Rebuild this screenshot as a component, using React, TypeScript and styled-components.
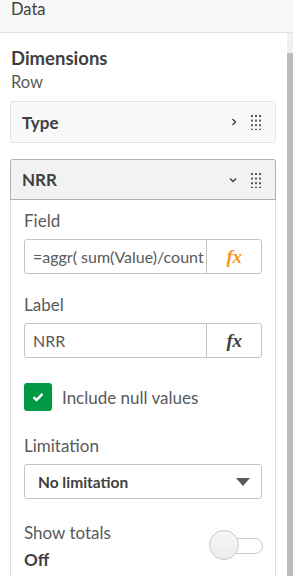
import React from 'react';
import styled, { createGlobalStyle } from 'styled-components';

const Global = createGlobalStyle`
  html, body { margin: 0; padding: 0; background: #ffffff; }
  body {
    font-family: Lato, "Open Sans", "Liberation Sans", sans-serif;
    color: #404040;
    width: 293px;
    height: 576px;
    overflow: hidden;
  }
  * { box-sizing: border-box; }
`;

const Page = styled.div`
  width: 293px;
  height: 576px;
  display: flex;
  flex-direction: column;
  overflow: hidden;
`;

const TopBar = styled.div`
  height: 33px;
  flex: none;
  background: #f8f8f8;
  border-bottom: 1px solid #e2e2e2;
  padding-left: 11px;
  font-size: 16.5px;
  line-height: 18px;
  color: #404040;
`;

const Body = styled.div`
  flex: 1;
  display: flex;
  min-height: 0;
`;

const Content = styled.div`
  flex: 1;
  min-width: 0;
  padding: 15px 11px 0 10px;
  overflow: hidden;
`;

const ScrollTrack = styled.div`
  width: 6px;
  flex: none;
  background: #f0f0f0;
  display: flex;
  justify-content: flex-end;
  padding-top: 20px;
`;

const ScrollThumb = styled.div`
  width: 4px;
  flex: 1;
  background: #bdbdbd;
`;

const SectionTitle = styled.div`
  font-size: 18.5px;
  line-height: 20px;
  font-weight: 700;
  color: #404040;
  padding-left: 1px;
`;

const SectionSub = styled.div`
  font-size: 16.5px;
  line-height: 20px;
  color: #595959;
  padding-left: 1px;
  margin-top: 4px;
`;

const Card = styled.div<{ $open?: boolean }>`
  margin-top: ${(p) => (p.$open ? '16px' : '9px')};
  border: 1px solid ${(p) => (p.$open ? '#b0b0b0' : '#e4e4e4')};
  border-radius: 3px;
  background: ${(p) => (p.$open ? '#ffffff' : '#f9f9f9')};
  ${(p) => (p.$open ? 'border-bottom: none; border-bottom-left-radius: 0; border-bottom-right-radius: 0;' : '')}
`;

const CardHeader = styled.div<{ $open?: boolean }>`
  height: 40px;
  display: flex;
  align-items: center;
  padding: 0 13px 0 11px;
  background: ${(p) => (p.$open ? '#f2f2f2' : 'transparent')};
  ${(p) => (p.$open ? 'border-bottom: 1px solid #b0b0b0; border-radius: 2px 2px 0 0;' : '')}
`;

const CardTitle = styled.div`
  flex: 1;
  font-size: 17px;
  font-weight: 700;
  color: #404040;
`;

const HeaderIcons = styled.div`
  display: flex;
  align-items: center;
  gap: 13px;
`;

const CardBody = styled.div`
  border-left: 1px solid #dddddd;
  border-right: 1px solid #dddddd;
  margin: 0 -1px;
  padding: 11px 13px 0 13px;
  height: 400px;
`;

const FieldLabel = styled.div`
  font-size: 17px;
  line-height: 20px;
  color: #595959;
  height: 20px;
`;

const InputGroup = styled.div`
  margin-top: 8px;
  height: 35px;
  display: flex;
  border: 1px solid #c4c4c4;
  border-radius: 3px;
  background: #ffffff;
`;

const InputText = styled.div`
  flex: 1;
  min-width: 0;
  padding: 0 4px 0 8px;
  display: flex;
  align-items: center;
  font-size: 16px;
  color: #595959;
  white-space: nowrap;
  overflow: hidden;
`;

const FxButton = styled.div<{ $active?: boolean }>`
  width: 55px;
  flex: none;
  border-left: 1px solid #c4c4c4;
  display: flex;
  align-items: center;
  justify-content: center;
  font-family: "Liberation Serif", "DejaVu Serif", serif;
  font-style: italic;
  font-weight: 700;
  font-size: 19px;
  color: ${(p) => (p.$active ? '#f8981d' : '#404040')};
  letter-spacing: -0.5px;
`;

const Group = styled.div<{ $gap: number }>`
  margin-top: ${(p) => p.$gap}px;
`;

const CheckRow = styled.label`
  display: flex;
  align-items: center;
  gap: 10px;
  margin-top: 25px;
  font-size: 17px;
  color: #595959;
`;

const CheckBox = styled.span`
  width: 28px;
  height: 28px;
  border-radius: 3px;
  background: #009845;
  display: flex;
  align-items: center;
  justify-content: center;
`;

const Select = styled.div`
  margin-top: 8px;
  height: 35px;
  border: 1px solid #c4c4c4;
  border-radius: 3px;
  display: flex;
  align-items: center;
  padding: 0 11px 0 13px;
  font-size: 15.5px;
  font-weight: 700;
  color: #404040;
`;

const SelectValue = styled.span`
  flex: 1;
`;

const Caret = styled.span`
  width: 0;
  height: 0;
  border-left: 7px solid transparent;
  border-right: 7px solid transparent;
  border-top: 8px solid #595959;
`;

const SwitchRow = styled.div`
  margin-top: 24px;
  display: flex;
  align-items: flex-start;
`;

const SwitchText = styled.div`
  flex: 1;
`;

const OffText = styled.div`
  font-size: 17px;
  line-height: 20px;
  font-weight: 700;
  color: #404040;
  margin-top: 7px;
`;

const Switch = styled.div`
  position: relative;
  width: 54px;
  height: 30px;
  margin-top: 7px;
  margin-right: -1px;
`;

const SwitchTrack = styled.div`
  position: absolute;
  left: 4px;
  right: 0;
  top: 8px;
  height: 16px;
  border: 1px solid #c8c8c8;
  border-radius: 8px;
  background: #ffffff;
`;

const SwitchKnob = styled.div`
  position: absolute;
  left: 0;
  top: 0;
  width: 30px;
  height: 30px;
  border-radius: 50%;
  border: 1px solid #c8c8c8;
  background: linear-gradient(#f8f8f8, #ececec);
`;

const Dots = () => (
  <svg width="12" height="16" viewBox="0 0 12 16">
    {[0, 1, 2, 3].map((r) =>
      [0, 1, 2].map((c) => (
        <rect key={`${r}-${c}`} x={1 + c * 4} y={1 + r * 4.6} width="2" height="2" fill="#55585c" />
      ))
    )}
  </svg>
);

const ChevronRight = () => (
  <svg width="6" height="8" viewBox="0 0 6 8">
    <path d="M1.5 1 L4.5 4 L1.5 7" fill="none" stroke="#404040" strokeWidth="1.4" />
  </svg>
);

const ChevronDown = () => (
  <svg width="8" height="6" viewBox="0 0 8 6">
    <path d="M1 1.5 L4 4.5 L7 1.5" fill="none" stroke="#404040" strokeWidth="1.4" />
  </svg>
);

const Check = () => (
  <svg width="12" height="10" viewBox="0 0 12 10">
    <path d="M1.5 5.2 L4.5 8 L10.5 1.8" fill="none" stroke="#ffffff" strokeWidth="2.4" />
  </svg>
);

export default function App() {
  return (
    <Page>
      <Global />
      <TopBar>Data</TopBar>
      <Body>
        <Content>
          <SectionTitle>Dimensions</SectionTitle>
          <SectionSub>Row</SectionSub>
          <Card>
            <CardHeader>
              <CardTitle>Type</CardTitle>
              <HeaderIcons>
                <ChevronRight />
                <Dots />
              </HeaderIcons>
            </CardHeader>
          </Card>
          <Card $open>
            <CardHeader $open>
              <CardTitle>NRR</CardTitle>
              <HeaderIcons>
                <ChevronDown />
                <Dots />
              </HeaderIcons>
            </CardHeader>
            <CardBody>
              <FieldLabel>Field</FieldLabel>
              <InputGroup>
                <InputText>=aggr( sum(Value)/count</InputText>
                <FxButton $active>fx</FxButton>
              </InputGroup>
              <Group $gap={21}>
                <FieldLabel>Label</FieldLabel>
                <InputGroup>
                  <InputText>NRR</InputText>
                  <FxButton>fx</FxButton>
                </InputGroup>
              </Group>
              <CheckRow>
                <CheckBox>
                  <Check />
                </CheckBox>
                Include null values
              </CheckRow>
              <Group $gap={25}>
                <FieldLabel>Limitation</FieldLabel>
                <Select>
                  <SelectValue>No limitation</SelectValue>
                  <Caret />
                </Select>
              </Group>
              <SwitchRow>
                <SwitchText>
                  <FieldLabel>Show totals</FieldLabel>
                  <OffText>Off</OffText>
                </SwitchText>
                <Switch>
                  <SwitchTrack />
                  <SwitchKnob />
                </Switch>
              </SwitchRow>
            </CardBody>
          </Card>
        </Content>
        <ScrollTrack>
          <ScrollThumb />
        </ScrollTrack>
      </Body>
    </Page>
  );
}
